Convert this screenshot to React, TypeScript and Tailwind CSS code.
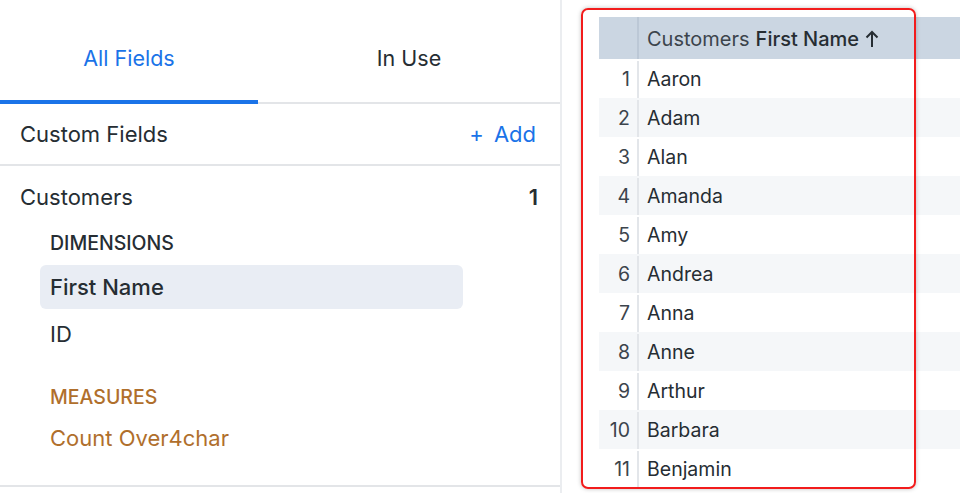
import React from "react";

const names = [
  "Aaron",
  "Adam",
  "Alan",
  "Amanda",
  "Amy",
  "Andrea",
  "Anna",
  "Anne",
  "Arthur",
  "Barbara",
  "Benjamin",
];

export default function App() {
  return (
    <div
      className="flex h-[493px] w-[960px] overflow-hidden bg-white text-[#262d33]"
      style={{ fontFamily: "Inter, 'Open Sans', sans-serif" }}
    >
      {/* Field picker */}
      <div className="flex w-[562px] shrink-0 flex-col border-r-2 border-[#ebedf0]">
        <div className="flex h-[104px] border-b-2 border-[#e3e5e8]">
          <div className="relative flex w-[258px] items-center justify-center pt-[14px] text-[21.5px] text-[#1a73e8]">
            All Fields
            <div className="absolute -bottom-[2px] left-0 h-[4px] w-full bg-[#1a73e8]" />
          </div>
          <div className="flex flex-1 items-center justify-center pt-[14px] text-[21.5px]">In Use</div>
        </div>

        <div className="flex h-[62px] items-center justify-between border-b-2 border-[#e3e5e8] pl-[20px] pr-[24px] text-[22px]">
          <span>Custom Fields</span>
          <span className="text-[#1a73e8]">
            <span className="mr-[10px]">+</span>Add
          </span>
        </div>

        <div className="flex flex-1 flex-col border-b-2 border-[#e3e5e8] pb-[20px]">
          <div className="flex h-[62px] items-center justify-between pl-[20px] pr-[22px] text-[22px]">
            <span>Customers</span>
            <span className="font-semibold">1</span>
          </div>
          <div className="pl-[50px] text-[19.5px] font-medium leading-[30px] text-[#262d33]">DIMENSIONS</div>
          <div className="ml-[40px] mt-[7px] flex h-[44px] w-[423px] items-center rounded-[6px] bg-[#e9edf4] pl-[10px] text-[22px] font-medium">
            First Name
          </div>
          <div className="flex h-[50px] items-center pl-[50px] text-[22px]">ID</div>
          <div className="mt-[23px] pl-[50px] text-[19.5px] font-medium leading-[30px] text-[#b06f2c]">MEASURES</div>
          <div className="mt-[4px] flex h-[44px] items-center pl-[50px] text-[22px] text-[#b06f2c]">Count Over4char</div>
        </div>
        <div className="h-[6px]" />
      </div>

      {/* Results table */}
      <div className="relative flex-1 pl-[37px] pt-[17px]">
        <div className="flex h-[42px] bg-[#cbd6e2] text-[20px]">
          <div className="w-[40px] border-r-2 border-[#bcc8d6]" />
          <div className="flex items-center pl-[8px] pt-[1px] text-[#3c444c]">
            Customers<span className="ml-[6px] font-medium text-[#262d33]">First Name</span>
            <svg className="ml-[6px]" width="14" height="18" viewBox="0 0 14 18" fill="none" stroke="#262d33" strokeWidth="2">
              <path d="M7 17V2M1.5 7.5L7 2l5.5 5.5" />
            </svg>
          </div>
        </div>
        {names.map((name, i) => (
          <div
            key={name}
            className={`flex h-[39px] pt-[2px] text-[19.5px] ${i % 2 === 1 ? "bg-[#f5f7f9]" : "bg-white"}`}
          >
            <div className="flex w-[40px] items-center justify-end border-r-2 border-[#e3e6ea] pr-[7px] text-[#3c444c]">
              {i + 1}
            </div>
            <div className="flex items-center pl-[8px]">{name}</div>
          </div>
        ))}

        {/* Highlight annotation */}
        <div className="pointer-events-none absolute left-[19px] top-[8px] h-[481px] w-[335px] rounded-[7px] border-2 border-[#f21c1c] shadow-[0_0_4px_rgba(0,0,0,0.25)]" />
      </div>
    </div>
  );
}
